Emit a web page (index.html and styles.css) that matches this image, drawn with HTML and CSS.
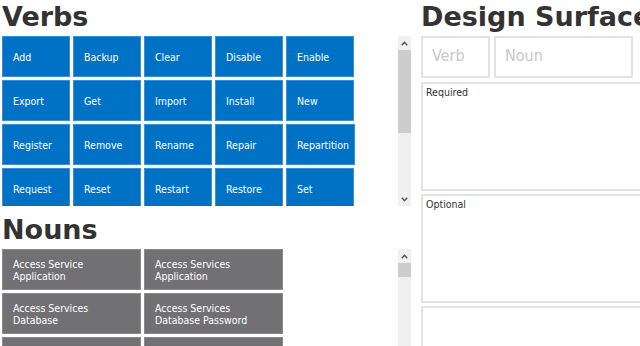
FILE: index.html
```html
<!DOCTYPE html>
<html>
<head>
<meta charset="utf-8">
<link rel="stylesheet" href="styles.css">
</head>
<body>
<div class="page">
  <section class="library">
    <h2 class="title">Verbs</h2>
    <div class="panel verbs-panel">
      <div class="tiles verbs">
        <div class="tile verb">Add</div>
        <div class="tile verb">Backup</div>
        <div class="tile verb">Clear</div>
        <div class="tile verb">Disable</div>
        <div class="tile verb">Enable</div>
        <div class="tile verb">Export</div>
        <div class="tile verb">Get</div>
        <div class="tile verb">Import</div>
        <div class="tile verb">Install</div>
        <div class="tile verb">New</div>
        <div class="tile verb">Register</div>
        <div class="tile verb">Remove</div>
        <div class="tile verb">Rename</div>
        <div class="tile verb">Repair</div>
        <div class="tile verb wide">Repartition</div>
        <div class="tile verb">Request</div>
        <div class="tile verb">Reset</div>
        <div class="tile verb">Restart</div>
        <div class="tile verb">Restore</div>
        <div class="tile verb">Set</div>
      </div>
      <div class="scrollbar">
        <div class="sb-btn"><svg width="7" height="5" viewBox="0 0 7 5"><polyline points="0.8,4.3 3.5,1.3 6.2,4.3" fill="none" stroke="#505050" stroke-width="1.4"/></svg></div>
        <div class="sb-thumb verbs-thumb"></div>
        <div class="sb-track"></div>
        <div class="sb-btn"><svg width="7" height="5" viewBox="0 0 7 5"><polyline points="0.8,0.7 3.5,3.7 6.2,0.7" fill="none" stroke="#505050" stroke-width="1.4"/></svg></div>
      </div>
    </div>

    <h2 class="title nouns-title">Nouns</h2>
    <div class="panel nouns-panel">
      <div class="tiles nouns">
        <div class="tile noun">Access Service Application</div>
        <div class="tile noun">Access Services Application</div>
        <div class="tile noun">Access Services Database</div>
        <div class="tile noun">Access Services Database Password</div>
        <div class="tile noun">Access Services Database Server</div>
        <div class="tile noun">Access Services Service Application</div>
      </div>
      <div class="scrollbar">
        <div class="sb-btn"><svg width="7" height="5" viewBox="0 0 7 5"><polyline points="0.8,4.3 3.5,1.3 6.2,4.3" fill="none" stroke="#505050" stroke-width="1.4"/></svg></div>
        <div class="sb-thumb nouns-thumb"></div>
        <div class="sb-track"></div>
      </div>
    </div>
  </section>

  <section class="design">
    <h2 class="title">Design Surface</h2>
    <div class="slots">
      <div class="slot verb-slot">Verb</div>
      <div class="slot noun-slot">Noun</div>
    </div>
    <div class="params">
      <div class="param-box">Required</div>
      <div class="param-box">Optional</div>
      <div class="param-box"></div>
    </div>
  </section>
</div>
</body>
</html>
```

FILE: styles.css
```css
html, body {
  margin: 0;
  padding: 0;
  background: #ffffff;
  overflow: hidden;
}

body {
  font-family: "DejaVu Sans Condensed", "DejaVu Sans", sans-serif;
  font-stretch: condensed;
  color: #333333;
}

.page {
  display: flex;
  width: 900px;
  height: 346px;
}

.title {
  margin: 0 0 2px 0;
  font-family: "DejaVu Sans", sans-serif;
  font-stretch: normal;
  font-weight: bold;
  font-size: 27px;
  line-height: 34px;
  color: #333333;
  white-space: nowrap;
}

.library {
  width: 409px;
  padding-left: 2px;
  flex: none;
  display: flex;
  flex-direction: column;
}

.panel {
  display: flex;
  justify-content: space-between;
  overflow: hidden;
}

.verbs-panel {
  height: 170px;
}

.nouns-title {
  margin-top: 7px;
}

.nouns-panel {
  flex: 1;
}

.tiles {
  display: flex;
  flex-wrap: wrap;
  align-content: flex-start;
  gap: 3px;
}

.verbs {
  width: 354px;
}

.nouns {
  width: 283px;
}

.tile {
  box-sizing: border-box;
  display: flex;
  align-items: center;
  height: 41px;
  padding: 0 8px 0 10px;
  font-size: 10.5px;
  color: #ffffff;
}

.verb {
  width: 68px;
  background: #0072c6;
  border: 1px solid #3b8fd6;
}

.verb.wide {
  width: 69px;
  padding-right: 0;
}

.noun {
  width: 139px;
  line-height: 12px;
  background: #717174;
  border: 1px solid #8a8a8c;
}

.scrollbar {
  width: 13px;
  flex: none;
  display: flex;
  flex-direction: column;
  background: #f0f0f0;
}

.sb-btn {
  height: 14px;
  flex: none;
  display: flex;
  align-items: center;
  justify-content: center;
}

.sb-thumb {
  flex: none;
  background: #cdcdcd;
}

.verbs-thumb {
  height: 83px;
}

.nouns-thumb {
  height: 14px;
}

.sb-track {
  flex: 1;
}

.design {
  margin-left: 10px;
  width: 440px;
  flex: none;
  display: flex;
  flex-direction: column;
}

.slots {
  display: flex;
  gap: 4px;
}

.slot {
  box-sizing: border-box;
  height: 42px;
  border: 2px solid #e2e2e2;
  display: flex;
  align-items: center;
  padding: 0 0 3px 9px;
  font-size: 16px;
  color: #c8c8c8;
}

.verb-slot {
  width: 69px;
}

.noun-slot {
  width: 139px;
}

.params {
  margin-top: 4px;
  display: flex;
  flex-direction: column;
  gap: 3px;
}

.param-box {
  box-sizing: border-box;
  height: 109px;
  border: 2px solid #e2e2e2;
  padding: 2px 3px;
  font-size: 10.5px;
  line-height: 13px;
  color: #333333;
}
```
